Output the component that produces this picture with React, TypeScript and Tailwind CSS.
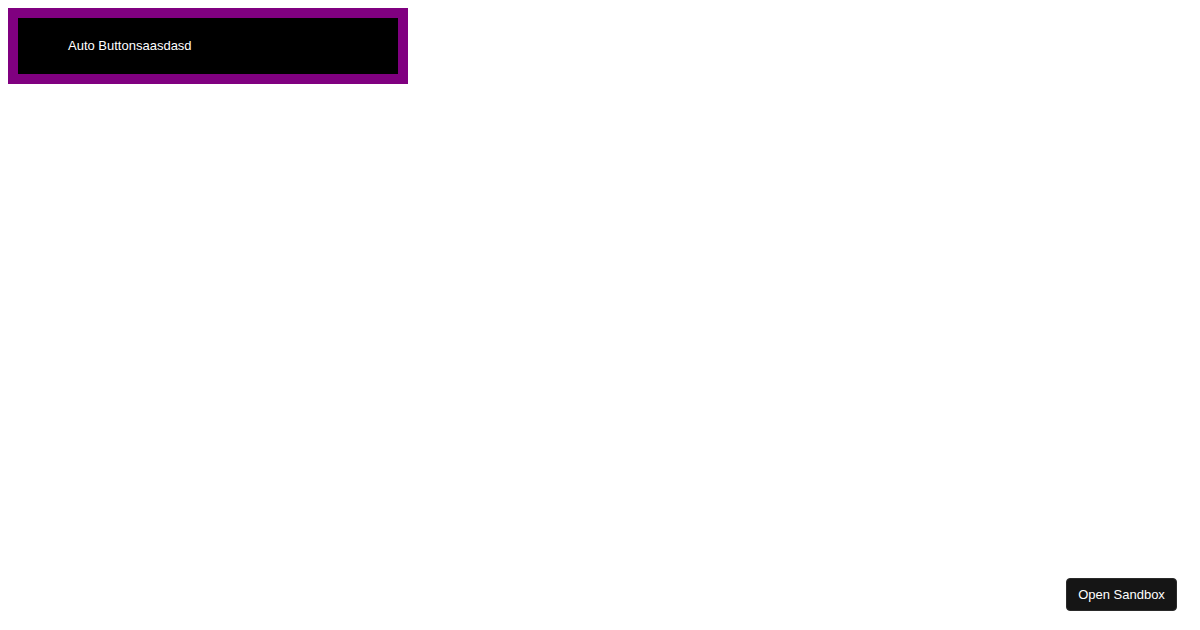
export default function App() {
  return (
    <div className="min-h-screen bg-white p-2 font-['Liberation_Sans',Arial,sans-serif]">
      <div className="w-[400px] h-[76px] border-[10px] border-[#800080] bg-black flex items-center pl-[50px]">
        <span className="text-[13px] text-white">Auto Buttonsaasdasd</span>
      </div>

      <button className="fixed right-[23px] bottom-[19px] w-[111px] h-[33px] rounded-[4px] bg-[#151515] border border-[#2a2a2a] text-[13px] text-white flex items-center justify-center">
        Open Sandbox
      </button>
    </div>
  );
}
